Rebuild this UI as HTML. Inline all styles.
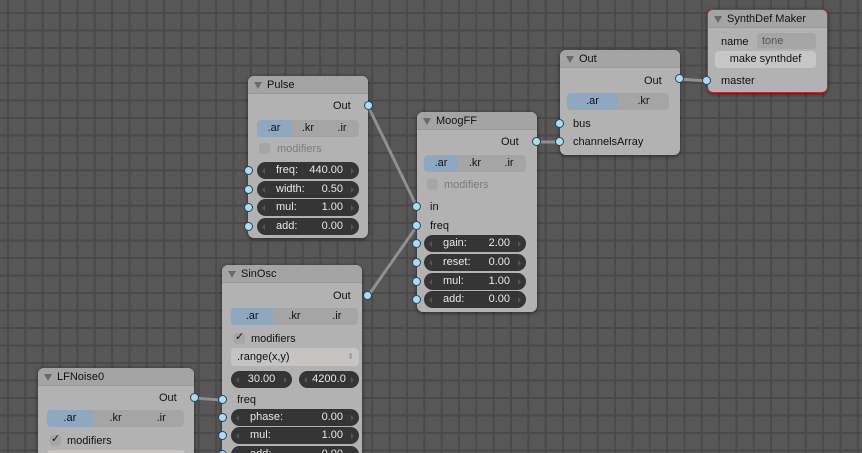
<!DOCTYPE html>
<html style="overflow:hidden;width:862px;height:453px"><head><meta charset="utf-8"><style>
*{margin:0;padding:0;box-sizing:border-box}
body{width:862px;height:453px;overflow:hidden;position:relative;font-family:"Liberation Sans","DejaVu Sans",sans-serif;font-size:11px;color:#111;
background-color:#575757;
background-image:linear-gradient(to right,#4a4a4a 2px,transparent 2px),linear-gradient(to bottom,#4a4a4a 2px,transparent 2px);
background-size:17.35px 17.5px;background-position:7px 12px}
.a{position:absolute}
.n{position:absolute;background:#b2b2b2;border-radius:6px;box-shadow:0 1px 4px rgba(0,0,0,.55);overflow:hidden}
.h{position:absolute;left:0;right:0;top:0;height:18px;background:#a4a4a4;border-bottom:1px solid #9a9a9a;padding-left:19px;line-height:18px;color:#111}
.h:before{content:"";position:absolute;left:6px;top:6px;border-left:4px solid transparent;border-right:4px solid transparent;border-top:7px solid #6a6a6a}
.s{position:absolute;width:9px;height:9px;border-radius:50%;background:#a9dcf8;border:1px solid #33424a}
.f{position:absolute;height:17px;border-radius:9px;background:#353535;color:#e8e8e8;line-height:17px;padding:0 16px 0 19px}
.f b{font-weight:normal;float:right}
.f:before{content:"";position:absolute;left:5px;top:6px;border-top:3px solid transparent;border-bottom:3px solid transparent;border-right:3px solid #555}
.f:after{content:"";position:absolute;right:5px;top:6px;border-top:3px solid transparent;border-bottom:3px solid transparent;border-left:3px solid #555}
.bt{position:absolute;height:17px;display:flex;border-radius:4px;overflow:hidden;background:#a5a5a5}
.bt span{flex:1;text-align:center;line-height:17px;color:#111}
.bt span.on{background:#8fa8bf}
.cb{position:absolute;width:11px;height:11px;border-radius:3px;background:#a6a6a6}
.t{position:absolute;white-space:nowrap;line-height:13px}
</style></head><body>
<svg class="a" style="left:0;top:0" width="862" height="453">
<g fill="none" stroke="#9a9a9a" stroke-width="3" stroke-opacity=".85">
<path d="M368 106 L417 207"/>
<path d="M368 296 L417 226"/>
<path d="M537 142 L560 142"/>
<path d="M680 79 L707 81"/>
<path d="M194 398 L222 400"/>
</g></svg>

<!-- Pulse -->
<div class="n" style="left:248px;top:76px;width:120px;height:162px"><div class="h">Pulse</div></div>
<div class="t" style="left:333px;top:100px">Out</div>
<div class="bt" style="left:257px;top:120px;width:102px"><span class="on">.ar</span><span>.kr</span><span>.ir</span></div>
<div class="cb" style="left:259px;top:143px"></div><div class="t" style="left:277px;top:143px;color:#7c7c7c">modifiers</div>
<div class="f" style="left:257px;top:162px;width:102px">freq:<b>440.00</b></div>
<div class="f" style="left:257px;top:181px;width:102px">width:<b>0.50</b></div>
<div class="f" style="left:257px;top:199px;width:102px">mul:<b>1.00</b></div>
<div class="f" style="left:257px;top:218px;width:102px">add:<b>0.00</b></div>
<div class="s" style="left:364px;top:101px"></div>
<div class="s" style="left:244px;top:166px"></div><div class="s" style="left:244px;top:185px"></div><div class="s" style="left:244px;top:203px"></div><div class="s" style="left:244px;top:222px"></div>

<!-- MoogFF -->
<div class="n" style="left:417px;top:112px;width:120px;height:200px"><div class="h">MoogFF</div></div>
<div class="t" style="left:501px;top:136px">Out</div>
<div class="bt" style="left:424px;top:155px;width:102px"><span class="on">.ar</span><span>.kr</span><span>.ir</span></div>
<div class="cb" style="left:427px;top:179px"></div><div class="t" style="left:444px;top:179px;color:#7c7c7c">modifiers</div>
<div class="t" style="left:430px;top:201px">in</div>
<div class="t" style="left:430px;top:220px">freq</div>
<div class="f" style="left:424px;top:235px;width:102px">gain:<b>2.00</b></div>
<div class="f" style="left:424px;top:254px;width:102px">reset:<b>0.00</b></div>
<div class="f" style="left:424px;top:273px;width:102px">mul:<b>1.00</b></div>
<div class="f" style="left:424px;top:291px;width:102px">add:<b>0.00</b></div>
<div class="s" style="left:532px;top:137px"></div>
<div class="s" style="left:412px;top:202px"></div><div class="s" style="left:412px;top:221px"></div><div class="s" style="left:412px;top:239px"></div><div class="s" style="left:412px;top:258px"></div><div class="s" style="left:412px;top:277px"></div><div class="s" style="left:412px;top:295px"></div>

<!-- Out -->
<div class="n" style="left:560px;top:50px;width:120px;height:105px"><div class="h">Out</div></div>
<div class="t" style="left:644px;top:75px">Out</div>
<div class="bt" style="left:567px;top:93px;width:102px"><span class="on">.ar</span><span>.kr</span></div>
<div class="t" style="left:573px;top:118px">bus</div>
<div class="t" style="left:573px;top:136px">channelsArray</div>
<div class="s" style="left:675px;top:74px"></div>
<div class="s" style="left:555px;top:119px"></div><div class="s" style="left:555px;top:137px"></div>

<!-- SynthDef Maker -->
<div class="n" style="left:707px;top:9px;width:121px;height:84px;border:1.5px solid #e02020"><div class="h" style="top:0">SynthDef Maker</div></div>
<div class="t" style="left:721px;top:36px">name</div>
<div class="a" style="left:757px;top:33px;width:59px;height:16px;background:#a5a5a5;border-radius:3px;color:#555;padding-left:5px;line-height:16px">tone</div>
<div class="a" style="left:715px;top:51px;width:101px;height:17px;background:#c6c6c6;border-radius:4px;text-align:center;line-height:17px">make synthdef</div>
<div class="t" style="left:721px;top:75px">master</div>
<div class="s" style="left:702px;top:76px"></div>

<!-- SinOsc -->
<div class="n" style="left:222px;top:265px;width:140px;height:200px"><div class="h">SinOsc</div></div>
<div class="t" style="left:333px;top:290px">Out</div>
<div class="bt" style="left:231px;top:308px;width:127px"><span class="on">.ar</span><span>.kr</span><span>.ir</span></div>
<div class="cb" style="left:234px;top:333px"></div><div class="t" style="left:235px;top:331px;font-size:11px">✓</div><div class="t" style="left:251px;top:333px">modifiers</div>
<div class="a" style="left:231px;top:348px;width:128px;height:18px;background:#c6c3c3;border-radius:4px;line-height:18px;padding-left:6px">.range(x,y)<span style="position:absolute;right:5px;top:0;color:#999;font-size:8px">⬍</span></div>
<div class="f" style="left:231px;top:371px;width:61px;padding:0;text-align:center">30.00</div>
<div class="f" style="left:299px;top:371px;width:60px;padding:0;text-align:center">4200.0</div>
<div class="t" style="left:237px;top:394px">freq</div>
<div class="f" style="left:231px;top:409px;width:128px">phase:<b>0.00</b></div>
<div class="f" style="left:231px;top:427px;width:128px">mul:<b>1.00</b></div>
<div class="f" style="left:231px;top:446px;width:128px">add:<b>0.00</b></div>
<div class="s" style="left:363px;top:291px"></div>
<div class="s" style="left:218px;top:395px"></div><div class="s" style="left:218px;top:413px"></div><div class="s" style="left:218px;top:431px"></div><div class="s" style="left:218px;top:450px"></div>

<!-- LFNoise0 -->
<div class="n" style="left:38px;top:368px;width:156px;height:100px"><div class="h">LFNoise0</div></div>
<div class="t" style="left:159px;top:392px">Out</div>
<div class="bt" style="left:47px;top:410px;width:137px"><span class="on">.ar</span><span>.kr</span><span>.ir</span></div>
<div class="cb" style="left:50px;top:435px"></div><div class="t" style="left:51px;top:433px">✓</div><div class="t" style="left:67px;top:435px">modifiers</div>
<div class="a" style="left:47px;top:450px;width:138px;height:18px;background:#c6c3c3;border-radius:4px"></div>
<div class="s" style="left:190px;top:393px"></div>
</body></html>
